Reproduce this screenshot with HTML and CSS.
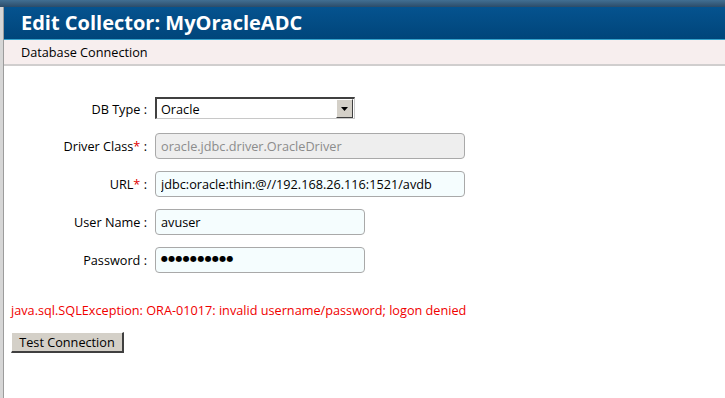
FILE: index.html
```html
<!doctype html>
<html>
	<head>
		<title>Edit Collector</title>
		<meta charset="UTF-8">
		<link rel="stylesheet" href="styles.css">
	</head>
	<body>
		<div class="topbar"></div>
		<div class="frame">
			<div class="header">Edit Collector: MyOracleADC</div>
			<div class="section">Database Connection</div>
			<div class="form">
				<label>DB Type :</label>
				<div class="select">
					<span class="value">Oracle</span>
					<span class="arrow"><svg width="7" height="4" viewBox="0 0 7 4"><path d="M0 0h7L3.5 4z" fill="#000"/></svg></span>
				</div>
				<label>Driver Class<span class="req">*</span> :</label>
				<input class="field wide" type="text" value="oracle.jdbc.driver.OracleDriver" disabled>
				<label>URL<span class="req">*</span> :</label>
				<input class="field wide" type="text" value="jdbc:oracle:thin:@//192.168.26.116:1521/avdb">
				<label>User Name :</label>
				<input class="field" type="text" value="avuser">
				<label>Password :</label>
				<div class="field pw">●●●●●●●●●●</div>
			</div>
			<div class="error">java.sql.SQLException: ORA-01017: invalid username/password; logon denied</div>
			<button class="btn">Test Connection</button>
		</div>
	</body>
</html>
```

FILE: styles.css
```css
body {
	margin: 0;
	background: #d6d6d6;
	font-family: "Open Sans", sans-serif;
	font-size: 12.7px;
	color: #000;
}
.topbar {
	height: 7px;
	background: linear-gradient(#416f93, #2c4c69);
}
.frame {
	margin-left: 3px;
	border-left: 1px solid #9c9c9c;
	background: #fff;
	height: 391px;
	overflow: hidden;
}
.header {
	height: 32px;
	line-height: 31px;
	padding-left: 17px;
	background: linear-gradient(#05538f, #00457a);
	color: #fff;
	font-weight: bold;
	font-size: 20px;
	border-bottom: 1px solid #35a2cc;
}
.section {
	height: 24px;
	line-height: 24px;
	padding-left: 17px;
	background: #f7eeee;
	border-bottom: 2px solid #d0cece;
}
.form {
	display: grid;
	grid-template-columns: 136px auto;
	column-gap: 8px;
	row-gap: 12px;
	align-items: center;
	justify-items: start;
	padding: 31px 0 0 7px;
}
.form label {
	justify-self: end;
	white-space: pre;
}
.req {
	color: #e00000;
}
.select {
	box-sizing: border-box;
	width: 200px;
	height: 22px;
	margin-bottom: 2px;
	display: flex;
	align-items: center;
	border-top: 2px solid #404040;
	border-left: 2px solid #404040;
	border-right: 1px solid #c8c8c8;
	border-bottom: 1px solid #c8c8c8;
	background: #fff;
}
.select .value {
	flex: 1;
	padding-left: 4px;
}
.select .arrow {
	box-sizing: border-box;
	width: 17px;
	height: 19px;
	margin-right: 1px;
	display: flex;
	align-items: center;
	justify-content: center;
	background: #d4d0c8;
	border-top: 1px solid #fff;
	border-left: 1px solid #fff;
	border-right: 1px solid #404040;
	border-bottom: 1px solid #404040;
}
.field {
	box-sizing: border-box;
	width: 210px;
	height: 26px;
	margin: 0;
	padding: 0 5px;
	border: 1px solid #a9a9a9;
	border-radius: 4px;
	background: #f5fdfe;
	font-family: "Open Sans", sans-serif;
	font-size: 12.7px;
	color: #000;
	outline: none;
}
.wide {
	width: 310px;
}
.field:disabled {
	background: #eeeeee;
	color: #8c8c8c;
}
.pw {
	display: flex;
	align-items: center;
	padding-bottom: 3px;
	font-family: "DejaVu Sans", sans-serif;
	font-size: 8px;
	letter-spacing: 0.3px;
}
.error {
	color: #f00000;
	margin: 28px 0 0 7px;
	line-height: 18px;
}
.btn {
	display: block;
	margin: 13px 0 0 7px;
	width: 113px;
	height: 21px;
	padding: 0;
	background: #d4d0c8;
	border-top: 1px solid #fff;
	border-left: 1px solid #fff;
	border-right: 2px solid #404040;
	border-bottom: 2px solid #404040;
	border-radius: 0;
	font-family: "Open Sans", sans-serif;
	font-size: 12.7px;
	color: #000;
}
```
